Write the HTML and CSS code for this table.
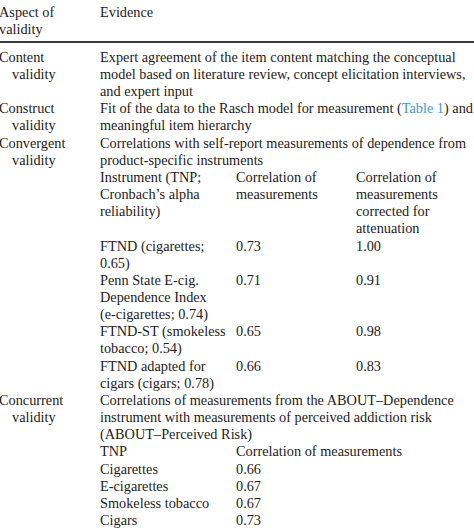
FILE: index.html
```html
<!DOCTYPE html>
<html>
<head>
<meta charset="utf-8">
<link rel="stylesheet" href="styles.css">
</head>
<body>
<div class="table">
  <div class="head row">
    <div class="c1">Aspect of<br>validity</div>
    <div class="c2">Evidence</div>
  </div>
  <div class="rule"></div>
  <div class="row">
    <div class="c1"><div>Content</div><div class="ind">validity</div></div>
    <div class="c2">Expert agreement of the item content matching the conceptual<br>model based on literature review, concept elicitation interviews,<br>and expert input</div>
  </div>
  <div class="row">
    <div class="c1"><div>Construct</div><div class="ind">validity</div></div>
    <div class="c2">Fit of the data to the Rasch model for measurement (<span class="link">Table 1</span>) and<br>meaningful item hierarchy</div>
  </div>
  <div class="row">
    <div class="c1"><div>Convergent</div><div class="ind">validity</div></div>
    <div class="c2">
      <div>Correlations with self-report measurements of dependence from<br>product-specific instruments</div>
      <div class="sub3">
        <div>Instrument (TNP;<br>Cronbach’s alpha<br>reliability)</div>
        <div>Correlation of<br>measurements</div>
        <div>Correlation of<br>measurements<br>corrected for<br>attenuation</div>
        <div>FTND (cigarettes;<br>0.65)</div>
        <div>0.73</div>
        <div>1.00</div>
        <div>Penn State E-cig.<br>Dependence Index<br>(e-cigarettes; 0.74)</div>
        <div>0.71</div>
        <div>0.91</div>
        <div>FTND-ST (smokeless<br>tobacco; 0.54)</div>
        <div>0.65</div>
        <div>0.98</div>
        <div>FTND adapted for<br>cigars (cigars; 0.78)</div>
        <div>0.66</div>
        <div>0.83</div>
      </div>
    </div>
  </div>
  <div class="row">
    <div class="c1"><div>Concurrent</div><div class="ind">validity</div></div>
    <div class="c2">
      <div>Correlations of measurements from the ABOUT–Dependence<br>instrument with measurements of perceived addiction risk<br>(ABOUT–Perceived Risk)</div>
      <div class="sub2">
        <div>TNP</div><div>Correlation of measurements</div>
        <div>Cigarettes</div><div>0.66</div>
        <div>E-cigarettes</div><div>0.67</div>
        <div>Smokeless tobacco</div><div>0.67</div>
        <div>Cigars</div><div>0.73</div>
      </div>
    </div>
  </div>
</div>
</body>
</html>
```
FILE: styles.css
```css
html, body {
  margin: 0;
  padding: 0;
  background: #ffffff;
}
body {
  font-family: "Liberation Serif", "Times New Roman", serif;
  font-size: 14.3px;
  line-height: 17.15px;
  color: #1e1b1c;
}
.table {
  margin-left: -1px;
  padding-top: 4px;
  width: 476px;
}
.row {
  display: grid;
  grid-template-columns: 101px 1fr;
  white-space: nowrap;
}
.head {
  padding-bottom: 3px;
}
.rule {
  height: 1.5px;
  background: #3a3a3a;
  margin-bottom: 6px;
}
.ind {
  padding-left: 13px;
}
.link {
  color: #3d9ad6;
}
.sub3 {
  display: grid;
  grid-template-columns: 136px 120px 1fr;
}
.sub2 {
  display: grid;
  grid-template-columns: 136px 1fr;
}
```
